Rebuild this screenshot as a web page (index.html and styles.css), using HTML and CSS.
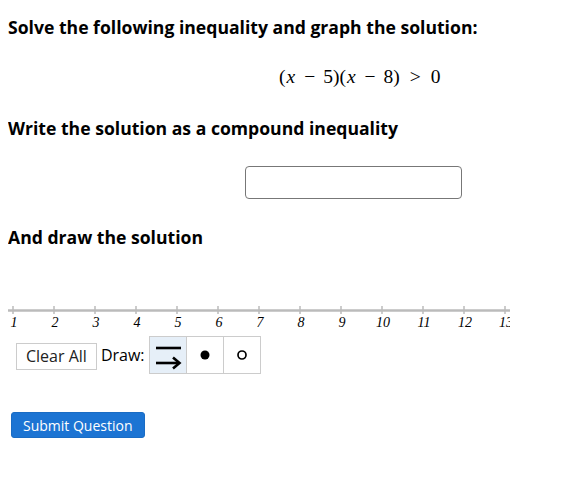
FILE: index.html
```html
<!DOCTYPE html>
<html lang="en">
<head>
    <meta charset="UTF-8">
    <title>Inequality Question</title>
    <link rel="stylesheet" href="styles.css">
</head>
<body>
    <div class="question">
        <p class="prompt first">Solve the following inequality and graph the solution:</p>

        <div class="math">
            <span class="paren">(</span><i>x</i><span class="op">−</span>5<span class="paren">)</span><span class="paren">(</span><i>x</i><span class="op">−</span>8<span class="paren">)</span><span class="op rel">&gt;</span>0
        </div>

        <p class="prompt">Write the solution as a compound inequality</p>

        <div class="answer">
            <input type="text" class="answer-input">
        </div>

        <p class="prompt">And draw the solution</p>

        <svg class="number-line" width="502" height="34" viewBox="0 0 502 34">
            <line x1="0" y1="13.5" x2="502" y2="13.5" stroke="#bbb" stroke-width="2.5"/>
            <g id="ticks" stroke="#bbb" stroke-width="1.5"></g>
            <g id="labels" class="tick-labels"></g>
        </svg>

        <div class="tools">
            <button class="clear-btn">Clear All</button>
            <span class="draw-label">Draw:</span>
            <div class="tool-group">
                <button class="tool active" title="Ray">
                    <svg width="30" height="30" viewBox="0 0 30 30">
                        <line x1="3" y1="8" x2="28" y2="8" stroke="#000" stroke-width="2.6"/>
                        <line x1="3" y1="23" x2="26" y2="23" stroke="#000" stroke-width="2.6"/>
                        <polyline points="20,17.5 26.5,23 20,28.5" fill="none" stroke="#000" stroke-width="2.6"/>
                    </svg>
                </button>
                <button class="tool" title="Closed point">
                    <svg width="30" height="30" viewBox="0 0 30 30">
                        <circle cx="15" cy="15" r="4.5" fill="#000"/>
                    </svg>
                </button>
                <button class="tool" title="Open point">
                    <svg width="30" height="30" viewBox="0 0 30 30">
                        <circle cx="15" cy="15" r="4" fill="#fff" stroke="#000" stroke-width="1.7"/>
                    </svg>
                </button>
            </div>
        </div>

        <button class="submit-btn">Submit Question</button>
    </div>

    <script>
        // build ticks and labels for 1..13
        const ticks = document.getElementById('ticks');
        const labels = document.getElementById('labels');
        const ns = 'http://www.w3.org/2000/svg';
        for (let i = 1; i <= 13; i++) {
            const x = 5 + (i - 1) * 41;
            const t = document.createElementNS(ns, 'line');
            t.setAttribute('x1', x);
            t.setAttribute('x2', x);
            t.setAttribute('y1', 9);
            t.setAttribute('y2', 17);
            ticks.appendChild(t);

            const label = document.createElementNS(ns, 'text');
            label.setAttribute('x', x + 1);
            label.setAttribute('y', 30);
            label.setAttribute('text-anchor', 'middle');
            label.textContent = i;
            labels.appendChild(label);
        }
    </script>
</body>
</html>
```

FILE: styles.css
```css
body {
    margin: 8px;
    font-family: 'Open Sans', sans-serif;
    color: #000;
    background: #fff;
}
.prompt {
    font-weight: bold;
    font-size: 17.6px;
    line-height: 24px;
    margin: 0;
}
.prompt.first {
    margin-top: 7px;
}
.math {
    font-family: 'Liberation Serif', serif;
    font-size: 19.5px;
    line-height: 24px;
    padding-left: 271px;
    margin: 26px 0 27px;
    white-space: nowrap;
}
.math i {
    font-style: italic;
    margin: 0 1px;
}
.math .op {
    margin: 0 8px;
}
.math .rel {
    margin: 0 10px;
}
.answer {
    padding-left: 237px;
    margin: 26px 0 26px;
}
.answer-input {
    display: block;
    width: 217px;
    height: 33px;
    box-sizing: border-box;
    border: 1px solid #777;
    border-radius: 4px;
    margin: 0;
}
.number-line {
    display: block;
    margin-top: 48px;
}
.tick-labels {
    font-family: 'Liberation Serif', serif;
    font-style: italic;
    font-size: 14px;
    fill: #000;
}
.tools {
    display: flex;
    align-items: center;
    margin-top: 5px;
    padding-left: 8px;
}
.clear-btn {
    font-family: 'Open Sans', sans-serif;
    font-size: 16px;
    color: #222;
    background: #fff;
    border: 1px solid #ccc;
    height: 27px;
    padding: 0 9px;
    margin: 2px 4px 0 0;
}
.draw-label {
    font-size: 16px;
    margin-right: 4px;
}
.tool-group {
    display: flex;
}
.tool {
    width: 38px;
    height: 38px;
    padding: 0;
    border: 1px solid #ccc;
    background: #fff;
    display: flex;
    align-items: center;
    justify-content: center;
    margin-left: -1px;
}
.tool:first-child {
    margin-left: 0;
}
.tool.active {
    background: #e6eff8;
}
.submit-btn {
    display: block;
    margin: 38px 0 0 3px;
    font-family: 'Open Sans', sans-serif;
    font-size: 14px;
    color: #fff;
    background: #1c74d3;
    border: 1px solid #1a6cc4;
    border-radius: 3px;
    height: 26px;
    padding: 0 11px;
}
```
